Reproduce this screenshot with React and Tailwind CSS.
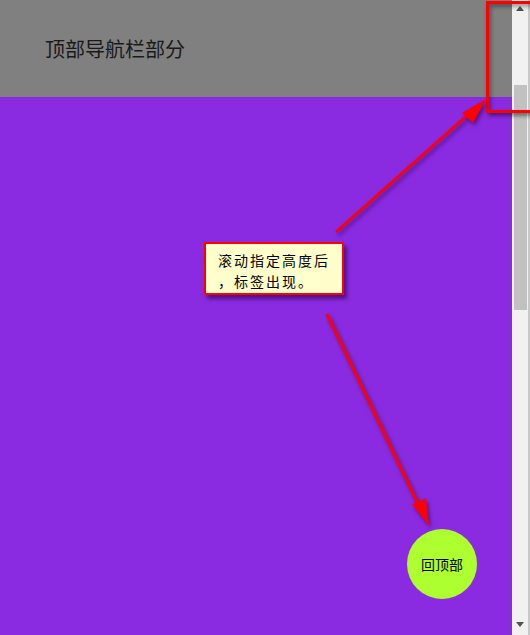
import React from "react";

const cjk = { fontFamily: '"Noto Sans CJK SC", "Noto Sans", sans-serif' };

const Arrows = () => (
  <svg
    className="pointer-events-none absolute left-0 top-0"
    width="530"
    height="635"
    viewBox="0 0 530 635"
    style={{ filter: "drop-shadow(2px 3px 2px rgba(40,0,70,0.55))" }}
  >
    {/* arrow to the scrollbar */}
    <line x1="336" y1="232" x2="472" y2="111" stroke="#ff0000" strokeWidth="3" />
    <polygon points="486,99 462,113 473,123" fill="#ff0000" />
    {/* arrow to the button */}
    <line x1="327" y1="314" x2="421" y2="510" stroke="#ff0000" strokeWidth="3" />
    <polygon points="429,526 412,504 426,498" fill="#ff0000" />
  </svg>
);

const Scrollbar = () => (
  <div className="flex w-[18px] flex-col border-r-2 border-[#c8c8c8] bg-[#f1f1f1]">
    <div className="flex h-[17px] items-center justify-center">
      <svg width="8" height="5" viewBox="0 0 8 5">
        <polygon points="4,0 8,5 0,5" fill="#505050" />
      </svg>
    </div>
    <div className="mx-auto mt-[68px] h-[225px] w-[13px] bg-[#c1c1c1]" />
    <div className="flex-1" />
    <div className="flex h-[17px] items-center justify-center pb-[4px]">
      <svg width="8" height="5" viewBox="0 0 8 5">
        <polygon points="0,0 8,0 4,5" fill="#505050" />
      </svg>
    </div>
  </div>
);

export default function App() {
  return (
    <div className="relative flex h-[635px] w-[530px] overflow-hidden" style={cjk}>
      <div className="flex flex-1 flex-col">
        <header className="flex h-[97px] items-center bg-[#808080] pl-[45px]">
          <span className="text-[20px] text-[#1a1a1a]">顶部导航栏部分</span>
        </header>
        <main className="flex-1 bg-[#8a2be2]" />
      </div>
      <Scrollbar />

      {/* highlight around the scrollbar */}
      <div className="absolute left-[486px] top-[1px] h-[112px] w-[60px] border-[3px] border-[#ff0000] shadow-[2px_3px_4px_rgba(0,0,0,0.45),inset_2px_3px_4px_rgba(0,0,0,0.35)]" />

      {/* note */}
      <div className="absolute left-[204px] top-[242px] h-[53px] w-[140px] border-2 border-[#ff0000] bg-[#ffffcc] pl-[12px] pt-[6px] text-[14px] leading-[21px] tracking-[2px] text-black shadow-[3px_4px_4px_rgba(40,0,70,0.6)]">
        <div>滚动指定高度后</div>
        <div>，标签出现。</div>
      </div>

      <Arrows />

      {/* back to top */}
      <button className="absolute left-[407px] top-[529px] flex h-[70px] w-[70px] items-center justify-center rounded-full bg-[#adff2f] text-[14px] text-black">
        回顶部
      </button>
    </div>
  );
}
